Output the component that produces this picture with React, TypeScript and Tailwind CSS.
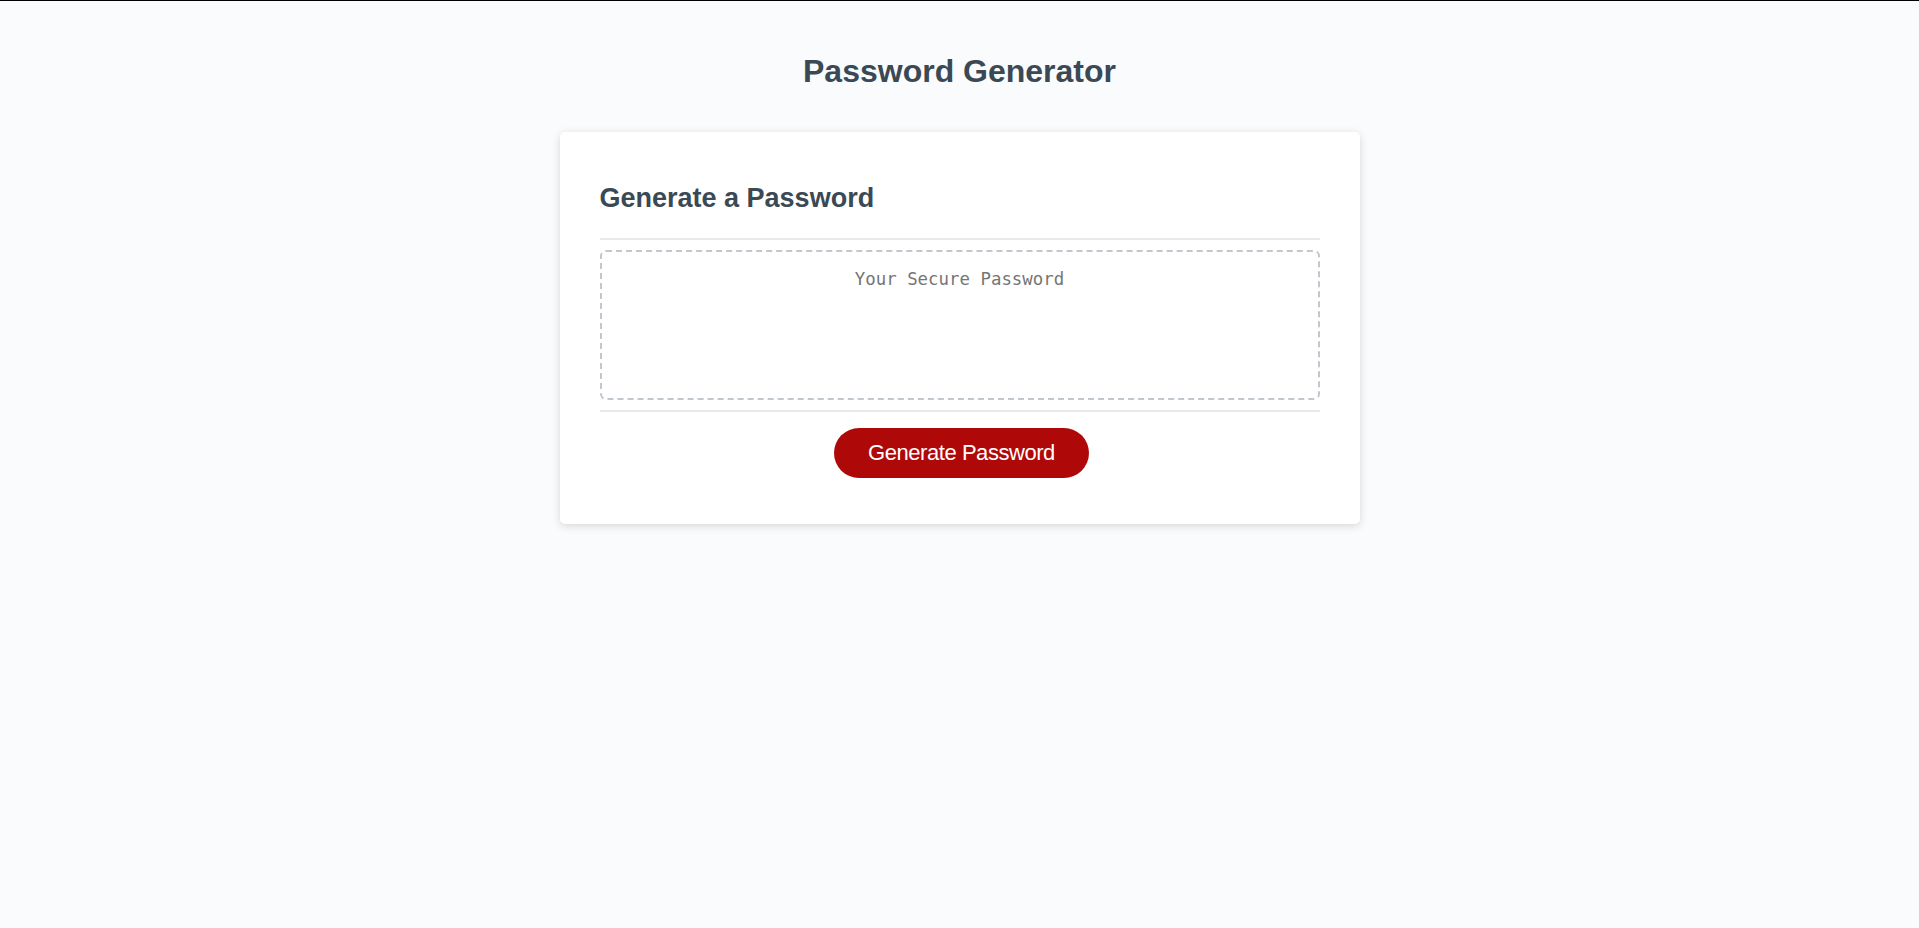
export default function App() {
  return (
    <div className="min-h-screen bg-[#f9fbfd] font-['Liberation_Sans',Arial,sans-serif] text-[#3b4954]">
      <div className="h-px bg-black" />
      <header className="pt-[52px] text-center">
        <h1 className="text-[32px] font-bold leading-[36px]">Password Generator</h1>
      </header>
      <main className="mx-auto mt-[43px] w-[800px] rounded-[5px] bg-white px-[40px] pt-[51px] pb-[30px] shadow-[0_2px_8px_0_rgba(0,0,0,0.15)]">
        <h2 className="text-[27px] font-bold leading-[31px]">Generate a Password</h2>
        <div className="mt-[24px] h-[2px] bg-[#e7e9eb]" />
        <textarea
          readOnly
          aria-label="Generated Password"
          placeholder="Your Secure Password"
          className="mt-[10px] block h-[150px] w-full resize-none overflow-hidden rounded-[6px] border-2 border-dashed border-[#c0c7cf] bg-white px-[2px] pt-[17px] text-center font-['DejaVu_Sans_Mono',monospace] text-[17.4px] leading-[20px] text-[#3b4954] outline-none placeholder:text-[#757575]"
        />
        <div className="mt-[10px] h-[2px] bg-[#e7e9eb]" />
        <div className="flex justify-center">
          <button
            type="button"
            className="mt-[16px] mr-[16px] mb-[16px] ml-[20px] cursor-pointer rounded-[25px] bg-[#af0808] px-[34px] py-[14px] font-['Liberation_Sans',Arial,sans-serif] text-[22px] leading-[22px] tracking-[-0.45px] text-white"
          >
            Generate Password
          </button>
        </div>
      </main>
    </div>
  );
}
